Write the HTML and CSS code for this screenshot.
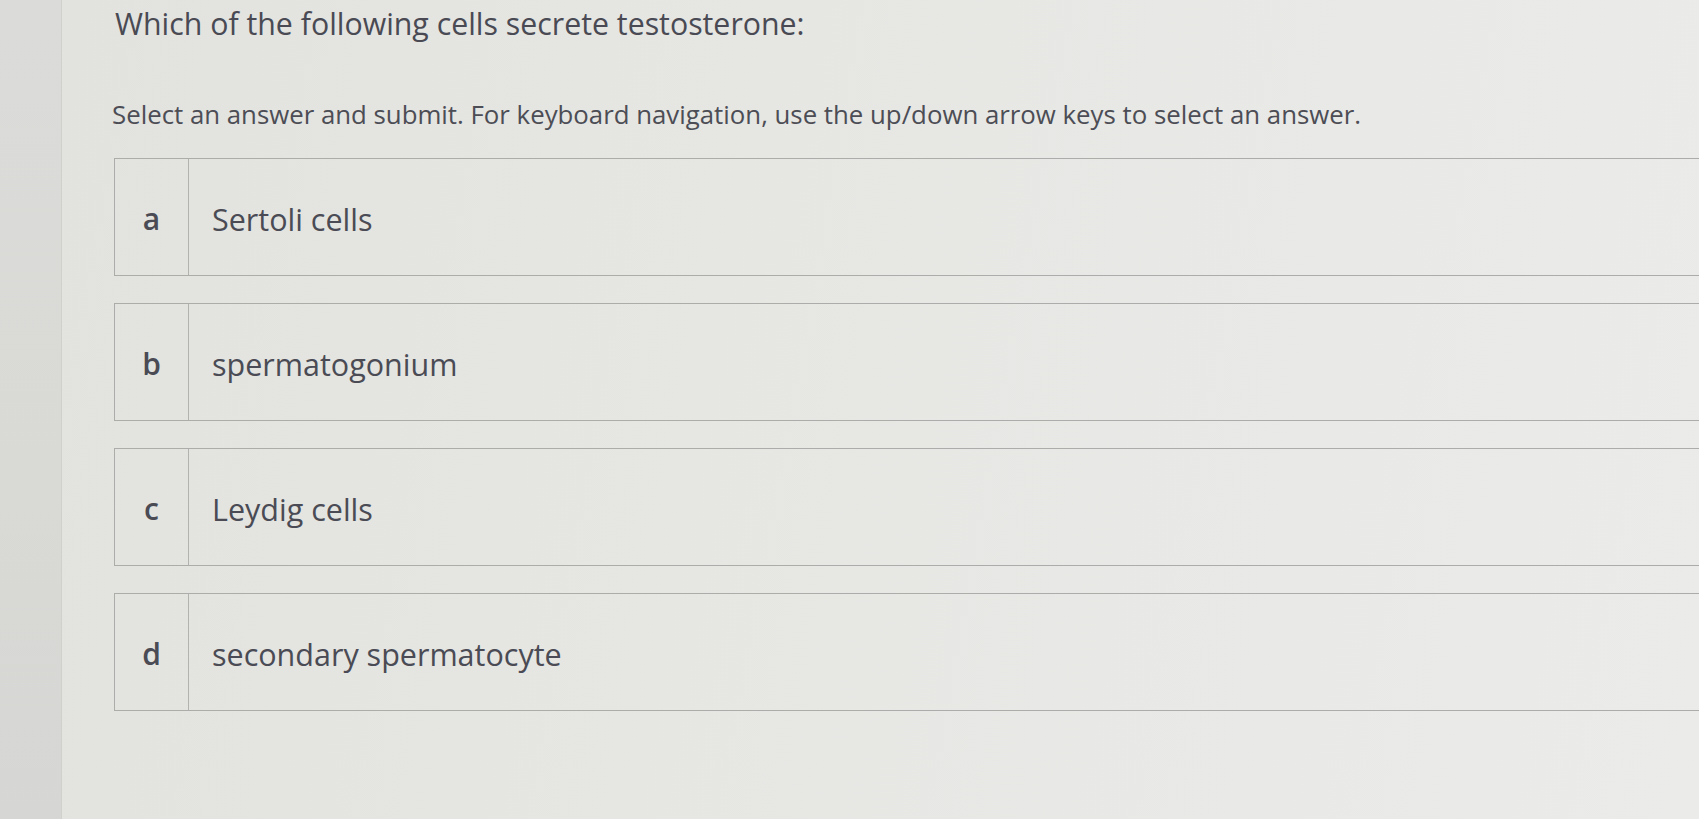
FILE: index.html
```html
<!DOCTYPE html>
<html lang="en">
<head>
<meta charset="utf-8">
<title>Question</title>
<link rel="stylesheet" href="styles.css">
</head>
<body>
<div class="page">
  <aside class="strip"></aside>
  <main class="content">
    <h1 class="question">Which of the following cells secrete testosterone:</h1>
    <p class="hint">Select an answer and submit. For keyboard navigation, use the up/down arrow keys to select an answer.</p>
    <ul class="options">
      <li class="option"><span class="key">a</span><span class="label">Sertoli cells</span></li>
      <li class="option"><span class="key">b</span><span class="label">spermatogonium</span></li>
      <li class="option"><span class="key">c</span><span class="label">Leydig cells</span></li>
      <li class="option"><span class="key">d</span><span class="label">secondary spermatocyte</span></li>
    </ul>
  </main>
</div>
</body>
</html>
```
FILE: styles.css
```css
html, body {
  margin: 0;
  padding: 0;
  height: 100%;
  overflow: hidden;
}
body {
  font-family: "Open Sans", "Noto Sans", sans-serif;
  color: #4a4b54;
  background: #e5e5e2;
}
.page {
  display: flex;
  height: 819px;
}
.strip {
  width: 61px;
  flex: 0 0 61px;
  background: linear-gradient(180deg, #dbdbd9 0%, #d9d9d6 60%, #d6d6d4 100%);
  border-right: 1px solid #d0d0cd;
}
.content {
  flex: 1;
  padding: 4px 0 0 52px;
  background: linear-gradient(100deg, #e2e2df 0%, #e6e6e3 40%, #e9e9e7 75%, #ebebe9 100%);
}
.question {
  margin: 0 0 0 1px;
  font-size: 30.3px;
  font-weight: 400;
  line-height: 40px;
  color: #494a53;
}
.hint {
  margin: 52px 0 26px -2px;
  font-size: 25.8px;
  line-height: 36px;
  color: #4c4d55;
}
.options {
  list-style: none;
  margin: 0;
  padding: 0;
  display: flex;
  flex-direction: column;
  gap: 27px;
}
.option {
  display: flex;
  height: 118px;
  box-sizing: border-box;
  border: 1px solid #acacaa;
  border-right: none;
}
.key {
  width: 74px;
  flex: 0 0 74px;
  box-sizing: border-box;
  border-right: 1px solid #b2b2b0;
  display: flex;
  align-items: center;
  justify-content: center;
  padding: 4px 0 0 0;
  font-size: 30px;
  font-weight: 600;
  line-height: 40px;
  color: #4a4b54;
}
.label {
  display: flex;
  align-items: center;
  padding: 4px 0 0 23px;
  font-size: 30.5px;
  line-height: 40px;
  color: #4a4b54;
}
```
